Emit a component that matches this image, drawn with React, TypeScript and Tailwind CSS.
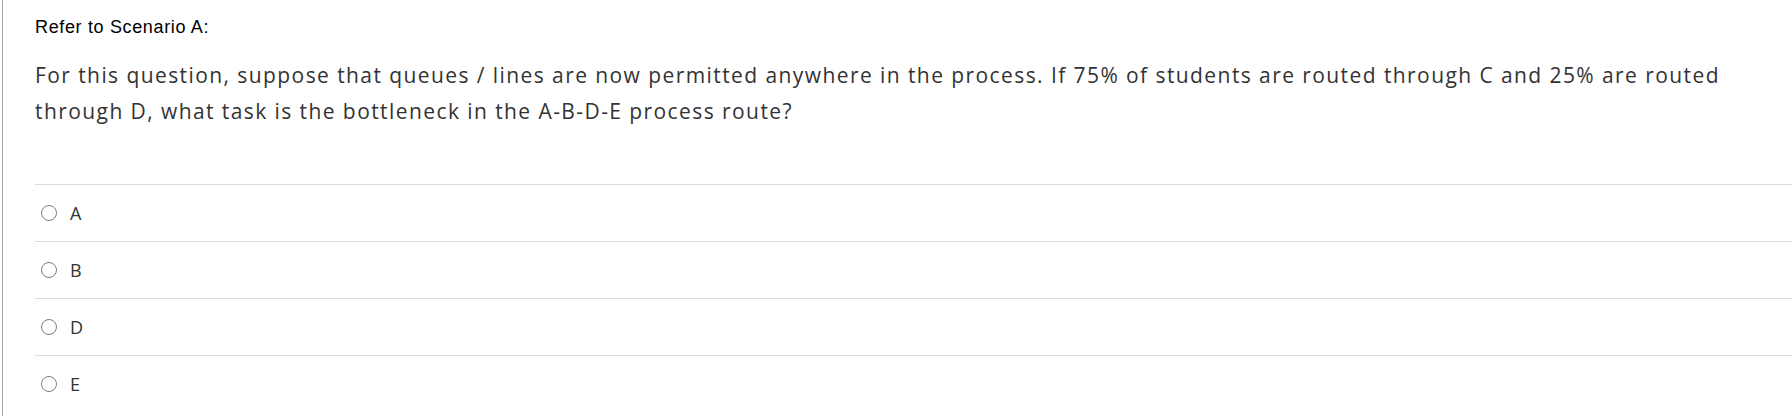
export default function App() {
  const options = ["A", "B", "D", "E"];

  return (
    <div className="min-h-[416px] bg-white">
      <div className="ml-[2px] min-h-[416px] border-l border-[#a6a6a6] pl-8">
        <p className="pt-[15px] font-['Liberation_Sans',Arial,sans-serif] text-[18px] leading-6 tracking-[0.65px] text-black">
          Refer to Scenario A:
        </p>

        <p className="mt-[18px] pr-6 font-['Open_Sans',sans-serif] text-[21px] leading-[36px] tracking-[1.42px] text-[#333333]">
          For this question, suppose that queues / lines are now permitted anywhere in the process. If 75% of students are
          routed through C and 25% are routed through D, what task is the bottleneck in the A-B-D-E process route?
        </p>

        <ul className="mt-[55px]">
          {options.map((opt) => (
            <li key={opt} className="flex h-[57px] items-center border-t border-[#dcdcdc] pl-[6px]">
              <span className="h-4 w-4 rounded-full border border-[#7c7c7c] bg-white" />
              <span className="ml-[13px] font-['Open_Sans',sans-serif] text-[18px] text-[#333333]">{opt}</span>
            </li>
          ))}
        </ul>
      </div>
    </div>
  );
}
